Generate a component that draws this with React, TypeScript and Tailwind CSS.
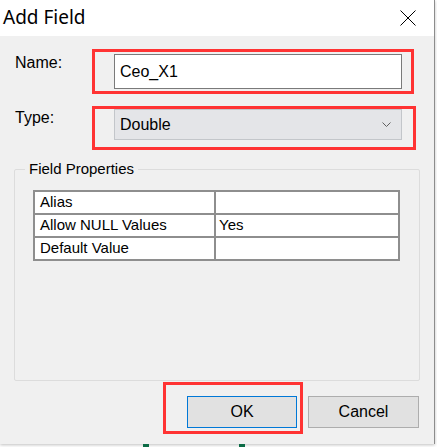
const rows = [
  { name: "Alias", value: "" },
  { name: "Allow NULL Values", value: "Yes" },
  { name: "Default Value", value: "" },
]

export default function App() {
  return (
    <div className="w-[437px] h-[447px] bg-white overflow-hidden font-['Liberation_Sans',Arial,sans-serif] text-black">
      <div className="w-[435px] h-[444px] flex flex-col border-r border-[#8c8c8c] shadow-[0_1px_3px_rgba(0,0,0,0.25)]">
        {/* title bar */}
        <div className="h-[36px] bg-white flex items-center justify-between pl-[3px] pr-[18px] shrink-0">
          <span className="text-[19px] font-['Noto_Sans',sans-serif] leading-none -mt-[1px]">Add Field</span>
          <svg width="16" height="16" viewBox="0 0 16 16" className="-mt-[1px]">
            <path d="M0.5 0.5 L15.5 15.5 M15.5 0.5 L0.5 15.5" stroke="#000" strokeWidth="1" fill="none" />
          </svg>
        </div>

        <div className="flex-1 bg-[#f0f0f0] flex flex-col">
          {/* name */}
          <div className="flex mt-[13px]">
            <div className="w-[92px] pl-[15px] pt-[5px] text-[16px] leading-[18px]">Name:</div>
            <div className="w-[322px] h-[45px] border-[3px] border-[#f33] pl-[19px] pr-[9px] py-[2px]">
              <div className="h-full bg-white border border-[#7a7a7a] flex items-center pl-[5px] text-[16px]">
                Ceo_X1
              </div>
            </div>
          </div>

          {/* type */}
          <div className="flex mt-[12px]">
            <div className="w-[92px] pl-[15px] pt-[3px] text-[16px] leading-[18px]">Type:</div>
            <div className="w-[324px] h-[44px] border-[3px] border-[#f33] pl-[19px] pr-[11px] pb-[7px]">
              <div className="h-full bg-[#e4e5e8] border border-[#c3c6ca] flex items-center justify-between pl-[5px] pr-[10px] text-[16px]">
                <span>Double</span>
                <svg width="9" height="5" viewBox="0 0 9 5">
                  <path d="M0.5 0.5 L4.5 4.5 L8.5 0.5" stroke="#606060" strokeWidth="1" fill="none" />
                </svg>
              </div>
            </div>
          </div>

          {/* field properties */}
          <fieldset className="ml-[14px] w-[406px] h-[221px] mt-[10px] border border-[#dcdcdc] rounded-[2px] pt-[12px]">
            <legend className="ml-[10px] px-[4px] text-[15px] leading-[18px]">Field Properties</legend>
            <div className="ml-[18px] w-[367px] border-2 border-[#8e8e8e] bg-white text-[15px] leading-[20px]">
              {rows.map((r, i) => (
                <div key={r.name} className={`flex ${i > 0 ? "border-t-2 border-[#8e8e8e]" : ""}`}>
                  <div className="w-[181px] pl-[5px] border-r-2 border-[#8e8e8e] h-[21px]">{r.name}</div>
                  <div className="flex-1 pl-[3px] h-[21px]">{r.value}</div>
                </div>
              ))}
            </div>
          </fieldset>

          {/* buttons */}
          <div className="flex justify-end items-start pr-[15px] mt-[1px]">
            <div className="w-[140px] h-[52px] border-[3px] border-[#f33] pl-[21px] pr-[3px] pt-[11px] pb-[3px]">
              <button className="w-full h-full bg-[#e1e1e1] border border-[#0078d7] text-[16px] flex items-center justify-center">
                OK
              </button>
            </div>
            <button className="ml-[5px] mt-[14px] w-[111px] h-[32px] bg-[#e1e1e1] border border-[#adadad] text-[16px] flex items-center justify-center">
              Cancel
            </button>
          </div>
        </div>
      </div>
      <div className="flex h-[3px]">
        <div className="ml-[143px] w-[6px] bg-[#0b6b45]" />
        <div className="ml-[90px] w-[6px] bg-[#0b6b45]" />
      </div>
    </div>
  )
}
